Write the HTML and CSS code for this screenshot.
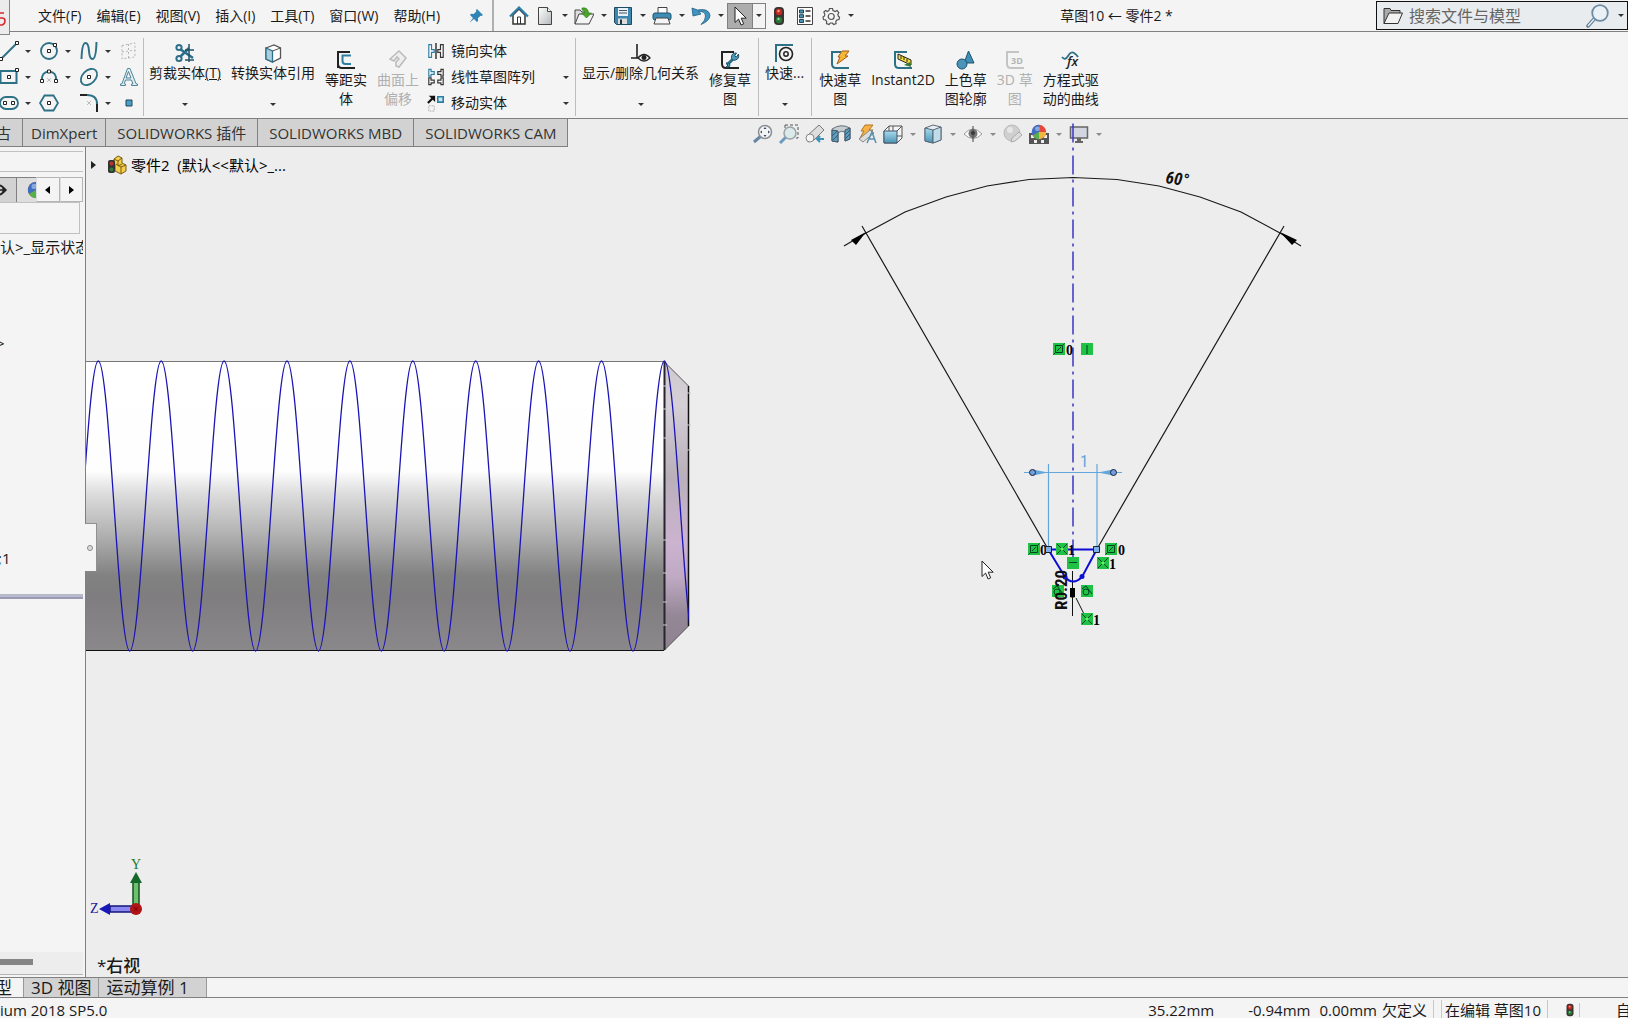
FILE: index.html
```html
<!DOCTYPE html>
<html lang="zh-CN">
<head>
<meta charset="utf-8">
<title>草图10 ← 零件2 *</title>
<link rel="stylesheet" href="styles.css">
</head>
<body>
<svg class="defs" aria-hidden="true">
  <defs>
    <linearGradient id="steel" x1="0" y1="0" x2="0" y2="1"><stop offset="0" stop-color="#a9dcef"/><stop offset="1" stop-color="#4a93b5"/></linearGradient>
    <linearGradient id="silver" x1="0" y1="0" x2="1" y2="1"><stop offset="0" stop-color="#fff"/><stop offset="1" stop-color="#b4b8ba"/></linearGradient>
    <symbol id="light" viewBox="0 0 20 20"><rect x="5" y="1" width="10" height="18" rx="4" fill="#3b3331"/><circle cx="10" cy="6" r="3.2" fill="#c9281f"/><circle cx="9.500" cy="5" r="1.200" fill="#f3a49c"/><circle cx="10" cy="14" r="3.200" fill="#247a35"/><circle cx="9.500" cy="13" r="1.200" fill="#8fd298"/></symbol>
    <symbol id="arrow" viewBox="0 0 20 20"><path d="M5 1v15.500l3.600-3.400 2.500 5.900 2.600-1.200-2.500-5.600h5z" fill="#fff" stroke="#222"/></symbol>
    <symbol id="ball" viewBox="0 0 20 20"><circle cx="10" cy="10" r="9" fill="#e8483c"/><path d="M10 10V1a9 9 0 0 0-7.800 13.500z" fill="#3c6fc4"/><path d="M10 10l-7.800 4.500A9 9 0 0 0 10 19z" fill="#54b24c"/><path d="M10 10v9a9 9 0 0 0 9-9z" fill="#f0b73c"/><circle cx="8" cy="6" r="3" fill="#fff" opacity=".4"/></symbol>
  </defs>
</svg>

<header class="titlebar">
  <div class="menubar">
    <button class="app-logo" aria-label="SOLIDWORKS"><svg width="9" height="20" viewBox="0 0 9 20"><path d="M0 6h4M0 11h2q3 0 3 3t-3 4H0" fill="none" stroke="#d8262c" stroke-width="1.500"/></svg></button>
    <nav class="menu">
      <button>文件(F)</button><button>编辑(E)</button><button>视图(V)</button><button>插入(I)</button><button>工具(T)</button><button>窗口(W)</button><button>帮助(H)</button>
    </nav>
    <button class="pin" aria-label="固定菜单"><svg width="14" height="14" viewBox="0 0 14 14"><path d="M8 0l6 6-1.500 1-1-.3-2.600 2.600.2 2.700-1.200 1L5 10l-4.500 3.800L4 9 1 6l1-1.200 2.700.2L7.300 2.400 7 1z" fill="#2f86b4"/></svg></button>
  </div>
  <div class="quick">
    <button class="tool" aria-label="主页"><svg viewBox="0 0 20 20"><path d="M4 9v9h12V9l-6-6z" fill="#fff" stroke="#333" stroke-width="1.500"/><path d="M8.500 18v-7h3v7" fill="none" stroke="#333"/><path d="M1 10.500l9-9 9 9" fill="none" stroke="#2d7fa8" stroke-width="2.200"/></svg></button>
    <button class="tool" aria-label="新建"><svg viewBox="0 0 20 20"><path d="M3.500 1.500h9l4 4v13h-13z" fill="url(#silver)" stroke="#444"/><path d="M12.500 1.500v4h4" fill="#fff" stroke="#444"/></svg></button>
    <button class="drop" aria-label="新建选项"><i class="caret"></i></button>
    <button class="tool" aria-label="打开"><svg viewBox="0 0 20 20"><path d="M1 18V4h5l2 2h6v2" fill="#ddd" stroke="#444"/><path d="M1 18L5 8h15l-5 10z" fill="#f4f4f4" stroke="#444"/><path d="M8 2q6-1 6.500 5h3l-5 5-5-5h3q0-3-2.500-3z" fill="#4ca52c" stroke="#2c741a" stroke-width=".6"/></svg></button>
    <button class="drop" aria-label="打开选项"><i class="caret"></i></button>
    <button class="tool" aria-label="保存"><svg viewBox="0 0 20 20"><path d="M1.500 1.500h17v17h-15l-2-2z" fill="#3d87ae" stroke="#1f4a5f"/><path d="M5 2h10v8H5z" fill="#e8f1f5"/><path d="M6 4.500h8M6 7h8" stroke="#456"/><path d="M5 12.500h9V18H5z" fill="#ddd"/><path d="M7 13.500h2V18H7z" fill="#234"/></svg></button>
    <button class="drop" aria-label="保存选项"><i class="caret"></i></button>
    <button class="tool" aria-label="打印"><svg viewBox="0 0 20 20"><path d="M6 7V1.500h9V7" fill="#fff" stroke="#444"/><rect x="1" y="7" width="18" height="7" rx="2" fill="#3e8db5" stroke="#1f536d"/><path d="M4 12h12l2 6H2z" fill="#f5f5f5" stroke="#444"/></svg></button>
    <button class="drop" aria-label="打印选项"><i class="caret"></i></button>
    <button class="tool" aria-label="撤销"><svg viewBox="0 0 20 20"><path d="M1 2l1 8 8-2-2.500-2Q14 4.500 14.500 10q.3 4-4.500 8.500Q18.500 15 19 9.500 18 2 6.500 4z" fill="#3f95c2" stroke="#1f5d80" stroke-width=".8"/></svg></button>
    <button class="drop" aria-label="撤销选项"><i class="caret"></i></button>
    <button class="tool pressed" aria-label="选择"><svg viewBox="0 0 20 20"><use href="#arrow"/></svg></button>
    <button class="drop boxed" aria-label="选择选项"><i class="caret"></i></button>
    <button class="tool" aria-label="重建模型"><svg viewBox="0 0 20 20"><use href="#light"/></svg></button>
    <button class="tool" aria-label="文件属性"><svg viewBox="0 0 20 20"><path d="M2.500 1.500h15v17h-15z" fill="#fff" stroke="#444"/><path d="M4.500 4h4v3h-4zM4.500 8.700h4v3h-4zM4.500 13.500h4v3h-4z" fill="#4b93b8" stroke="#245"/><path d="M10.500 5h5M10.500 10h5M10.500 15h5" stroke="#333" stroke-width="1.300"/></svg></button>
    <button class="tool" aria-label="选项"><svg viewBox="0 0 20 20"><path d="M8.500 2.500h3l.5 2 2 1 2-1 1.800 2-1 2 .7 2 1 .5-.5 2.500-2 .3-1.200 1.700.3 2-2.500 1-1.300-1.500h-2L8 18.500l-2.500-1 .2-2-1.200-1.700-2-.3L2 11l1.500-1 .3-2-1-1.800L4.600 4.500l1.900 1 1.500-1z" fill="none" stroke="#555" stroke-width="1.200"/><circle cx="10.200" cy="10.500" r="3" fill="none" stroke="#555" stroke-width="1.200"/></svg></button>
    <button class="drop" aria-label="选项菜单"><i class="caret"></i></button>
  </div>
  <h1 class="doc-title">草图10 ← 零件2 *</h1>
  <form class="search">
    <svg width="20" height="18" viewBox="0 0 20 18"><path d="M1 16.500V1.500h6l1 2h9V6" fill="#aaa" stroke="#333"/><path d="M1 16.500L6 6h13.500L15 16.500z" fill="#f2f2f2" stroke="#333"/></svg>
    <input type="search" placeholder="搜索文件与模型" aria-label="搜索文件与模型">
    <button type="button" class="go" aria-label="搜索"><svg width="24" height="24" viewBox="0 0 24 24"><path d="M2 22l7-8" stroke="#5c7b94" stroke-width="3.500" stroke-linecap="round"/><path d="M2 22l7-8" stroke="#e4edf2" stroke-width="1.500"/><circle cx="14" cy="9" r="7.800" fill="#e9f1f6" stroke="#6c8ca6" stroke-width="1.800"/></svg></button>
    <button type="button" class="drop" aria-label="搜索选项"><i class="caret"></i></button>
  </form>
</header>

<section class="ribbon" aria-label="草图">
  <div class="sketch-grid">
    <div><button class="tool" aria-label="直线"><svg viewBox="0 0 20 20"><path d="M3 17L17 3" stroke="#2d7186" stroke-width="2"/><path d="M.500 16.500h3v3h-3zM16.500 .500h3v3h-3z" fill="#fff" stroke="#222"/></svg></button><button class="drop" aria-label="直线选项"><i class="caret"></i></button></div>
    <div><button class="tool" aria-label="圆"><svg viewBox="0 0 20 20"><circle cx="10" cy="10" r="8" fill="none" stroke="#2d7186" stroke-width="1.800"/><path d="M8.500 8.500h3v3h-3zM14.500 2.500h3v3h-3z" fill="#fff" stroke="#222"/></svg></button><button class="drop" aria-label="圆选项"><i class="caret"></i></button></div>
    <div><button class="tool" aria-label="样条曲线"><svg viewBox="0 0 20 20"><path d="M2.500 18Q3 2 6.500 2q3 0 3.500 8t3.500 8Q17 18 17.500 1" fill="none" stroke="#2d7186" stroke-width="2"/></svg></button><button class="drop" aria-label="样条曲线选项"><i class="caret"></i></button></div>
    <div><button class="tool" aria-label="基准面"><svg viewBox="0 0 20 20"><path d="M3 4.500l13-2.500v14l-13 2zM9.500 3v14M3 11l13-2" fill="none" stroke="#b5b5b5" stroke-dasharray="2 2"/></svg></button></div>
    <div><button class="tool" aria-label="矩形"><svg viewBox="0 0 20 20"><path d="M1.500 4h16v12h-16z" fill="none" stroke="#2d7186" stroke-width="2"/><path d="M8.500 8.500h3v3h-3zM16.500 1.500h3v3h-3z" fill="#fff" stroke="#222"/></svg></button><button class="drop" aria-label="矩形选项"><i class="caret"></i></button></div>
    <div><button class="tool" aria-label="圆弧"><svg viewBox="0 0 20 20"><path d="M3 14Q2 5 10 4.500 18 5 17 14" fill="none" stroke="#2d7186" stroke-width="1.800"/><path d="M1.500 12.500h3v3h-3zM8.500 3h3v3h-3zM15.500 12.500h3v3h-3z" fill="#fff" stroke="#222"/><path d="M8 11l4 4m0-4l-4 4" stroke="#bbb"/></svg></button><button class="drop" aria-label="圆弧选项"><i class="caret"></i></button></div>
    <div><button class="tool" aria-label="椭圆"><svg viewBox="0 0 20 20"><ellipse cx="10" cy="10" rx="9.500" ry="6.500" fill="none" stroke="#2d7186" stroke-width="1.800" transform="rotate(-45 10 10)"/><path d="M8.500 8.500h3v3h-3z" fill="#fff" stroke="#222"/></svg></button><button class="drop" aria-label="椭圆选项"><i class="caret"></i></button></div>
    <div><button class="tool" aria-label="文字"><svg viewBox="0 0 20 20"><path d="M1.500 18.500h5v-1.500l-1.300-.3L6.500 13h6l1.500 3.800-1.500.2v1.500h6V17l-1.500-.3L11 1.500H8.500L3 16.700l-1.500.3zM7 11l2.500-6.500L12 11z" fill="#e6f0f4" stroke="#4d8599"/></svg></button></div>
    <div><button class="tool" aria-label="槽口"><svg viewBox="0 0 20 20"><rect x="1" y="4" width="18" height="12" rx="6" fill="none" stroke="#2d7186" stroke-width="1.800"/><path d="M4.500 8.500h3v3h-3zM12.500 8.500h3v3h-3z" fill="#fff" stroke="#222"/></svg></button><button class="drop" aria-label="槽口选项"><i class="caret"></i></button></div>
    <div><button class="tool" aria-label="多边形"><svg viewBox="0 0 20 20"><path d="M5.500 2.500h9L19 10l-4.500 7.500h-9L1 10z" fill="none" stroke="#2d7186" stroke-width="1.800"/><path d="M8.500 8.500h3v3h-3z" fill="#fff" stroke="#222"/></svg></button></div>
    <div><button class="tool" aria-label="圆角"><svg viewBox="0 0 20 20"><path d="M1 2h7" stroke="#222" stroke-width="2"/><path d="M8 2q10 0 10 9" fill="none" stroke="#2d7186" stroke-width="2"/><path d="M18 11v8" stroke="#222" stroke-width="2"/><path d="M8 8l4 4m0-4l-4 4" stroke="#bbb"/></svg></button><button class="drop" aria-label="圆角选项"><i class="caret"></i></button></div>
    <div><button class="tool" aria-label="点"><svg viewBox="0 0 20 20"><path d="M7 7h6v6H7z" fill="#4c9fc4" stroke="#1f4658"/></svg></button></div>
  </div>
  <div class="group">
    <button class="big high"><svg viewBox="0 0 20 20"><path d="M5 6l13 9M5 14L14 5" stroke="#2d6f8a" stroke-width="2.500"/><circle cx="4" cy="4.500" r="2.600" fill="none" stroke="#2d6f8a" stroke-width="2"/><circle cx="4" cy="15.500" r="2.600" fill="none" stroke="#2d6f8a" stroke-width="2"/><path d="M14 1v18M10 7h9M10 17h9" stroke="#1f5468" stroke-width="1.500"/></svg><span>剪裁实体<u>(T)</u></span><i class="caret"></i></button>
    <button class="big high"><svg viewBox="0 0 20 20"><path d="M3 5l8-3 6.500 3v10l-8 4L3 16z" fill="#fff" stroke="#555" stroke-width="1.300"/><path d="M3 5l6.500 3v11L3 16z" fill="#a9cedd" stroke="#2d6f8a" stroke-width="1.300"/><path d="M9.500 8l8-3" stroke="#555"/></svg><span>转换实体引用</span><i class="caret"></i></button>
    <button class="big"><svg viewBox="0 0 20 20"><path d="M14 2H2v16" fill="none" stroke="#222" stroke-width="2"/><path d="M2 14q0 4 4 4h13" fill="none" stroke="#222" stroke-width="2"/><path d="M15 5.500H6.500V11q0 3 3 3H15" fill="none" stroke="#2d7ea3" stroke-width="2"/></svg><span>等距实<br>体</span></button>
    <button class="big" disabled><svg viewBox="0 0 20 20"><path d="M2 9l9-8 7 7-7 9-3-1v-4l3-3-2-2-3 4z" fill="#eee" stroke="#bbb" stroke-width="1.500"/></svg><span>曲面上<br>偏移</span></button>
    <div class="list">
      <div><button><svg viewBox="0 0 20 20"><path d="M10 1v18" stroke="#222" stroke-width="1.500"/><path d="M2 3h3v5.500h3v3H5V17H2z" fill="#fff" stroke="#2d7ea3" stroke-width="1.300"/><path d="M18 3h-3v5.500h-3v3h3V17h3z" fill="#fff" stroke="#333" stroke-width="1.300"/></svg>镜向实体</button></div>
      <div><button><svg viewBox="0 0 20 20"><g fill="#fff" stroke-width="1.300"><path d="M2 1.500h2.500v2.500H8v3H4.500v2H2z" stroke="#2d7ea3"/><path d="M18 1.500h-2.500v2.500H12v3h3.500v2H18z" stroke="#333"/><path d="M2 11h2.500v2.500H8v3H4.500v2H2zM18 11h-2.500v2.500H12v3h3.500v2H18z" stroke="#333"/></g></svg>线性草图阵列</button><button class="drop" aria-label="阵列选项"><i class="caret"></i></button></div>
      <div><button><svg viewBox="0 0 20 20"><path d="M1 10l5-5" stroke="#111" stroke-width="2.500"/><path d="M2 2h7v7z" fill="#111"/><path d="M12 3h6v6h-6z" fill="#c8e5f0" stroke="#2d7ea3" stroke-width="1.800"/><path d="M2 13h6v6H2z" fill="none" stroke="#aaa" stroke-dasharray="2 1"/></svg>移动实体</button><button class="drop" aria-label="移动选项"><i class="caret"></i></button></div>
    </div>
  </div>
  <div class="group roomy">
    <button class="big high"><svg viewBox="0 0 20 20"><path d="M6 1v14M0 15h10" stroke="#222" stroke-width="1.600"/><path d="M7 15q6-7 12 0-6 6-12 0z" fill="#fff" stroke="#222" stroke-width="1.300"/><circle cx="13" cy="14.500" r="2.500" fill="#222"/></svg><span>显示/删除几何关系</span><i class="caret"></i></button>
    <button class="big"><svg viewBox="0 0 20 20"><path d="M14 2H2v12q0 4 4 4h13" fill="none" stroke="#222" stroke-width="2"/><path d="M7 15l7-7" stroke="#2b6a88" stroke-width="3"/><path d="M18.500 4q1 5-3 6t-4-3q0-4 5-4l-2 3 2 1zM10 15q0 3-4 2l2-2-2-2q4-1 4 2z" fill="#4a9cc0" stroke="#1f4e64"/></svg><span>修复草<br>图</span></button>
  </div>
  <div class="group roomy">
    <button class="big high"><svg viewBox="0 0 20 20"><path d="M1 19V2h17" fill="none" stroke="#2d7186" stroke-width="2"/><circle cx="11" cy="11" r="6.500" fill="none" stroke="#222" stroke-width="1.600"/><circle cx="11" cy="11" r="2.200" fill="#fff" stroke="#222" stroke-width="1.500"/></svg><span>快速...</span><i class="caret"></i></button>
  </div>
  <div class="group last">
    <button class="big"><svg viewBox="0 0 20 20"><path d="M11 2H2v12q0 4 4 4h13" fill="none" stroke="#2d7186" stroke-width="2"/><path d="M12 1h7l-4 5h3L7 14l3-7H8z" fill="#f6b73a" stroke="#a85b10"/></svg><span>快速草<br>图</span></button>
    <button class="big"><svg viewBox="0 0 20 20"><path d="M14 2H2v12q0 4 4 4h13" fill="none" stroke="#2d7186" stroke-width="2"/><path d="M5 4l13 6v5L5 9z" fill="#f5df3c" stroke="#222"/><path d="M8 6v3M11 7v3M14 9v3" stroke="#222"/><path d="M11 15l7 2-1-5z" fill="#347c3c"/></svg><span>Instant2D</span></button>
    <button class="big"><svg viewBox="0 0 20 20"><path d="M12.500 1L18 13H8z" fill="#3f8fb6" stroke="#1f526b"/><circle cx="6" cy="14" r="5" fill="#4a94b9" stroke="#1f526b"/></svg><span>上色草<br>图轮廓</span></button>
    <button class="big" disabled><svg viewBox="0 0 20 20"><path d="M14 2H2v12q0 4 4 4h13" fill="none" stroke="#c4c4c4" stroke-width="2"/><text x="6" y="14" font-size="9" font-weight="700" fill="#b5b5b5">3D</text></svg><span>3D 草<br>图</span></button>
    <button class="big"><svg viewBox="0 0 20 20"><path d="M1 7q3 4 6-1t6-3 4 4" fill="none" stroke="#2d7186" stroke-width="1.800"/><text x="6" y="16" font-size="13" font-style="italic" font-weight="600" fill="#222">fx</text></svg><span>方程式驱<br>动的曲线</span></button>
  </div>
</section>

<div class="tabstrip">
  <div class="cmd-tabs" role="tablist">
    <button role="tab" class="cut">古</button><button role="tab" class="snug">DimXpert</button><button role="tab">SOLIDWORKS 插件</button><button role="tab">SOLIDWORKS MBD</button><button role="tab">SOLIDWORKS CAM</button>
  </div>
  <div class="view-tools">
    <button class="tool" aria-label="整屏显示全图"><svg viewBox="0 0 20 20"><path d="M1 18l7-6" stroke="#6687a3" stroke-width="3"/><circle cx="12" cy="8" r="6.500" fill="#f2f4f5" stroke="#8a8f93" stroke-width="1.500"/><path d="M12 3l1.500 2h-3zM12 13l1.500-2h-3zM7 8l2-1.500v3zM17 8l-2-1.500v3z" fill="#446"/></svg></button>
    <button class="tool" aria-label="局部放大"><svg viewBox="0 0 20 20"><path d="M6 1h13v13h-3M6 1v4" fill="none" stroke="#555" stroke-dasharray="3 2"/><path d="M1 19l6-6" stroke="#6b9ac0" stroke-width="3"/><circle cx="11" cy="9" r="6" fill="#dbe9ea" stroke="#98a3a8" stroke-width="1.500"/></svg></button>
    <button class="tool" aria-label="上一视图"><svg viewBox="0 0 20 20"><path d="M2 12L14 1l5 5-10 10-6 2z" fill="#ddd" stroke="#777"/><circle cx="5" cy="14" r="4" fill="#f5f5f5" stroke="#888"/><path d="M19 15h-7m3-3l-3 3 3 3" fill="none" stroke="#3c8fb6" stroke-width="2"/></svg></button>
    <button class="tool" aria-label="剖面视图"><svg viewBox="0 0 20 20"><path d="M1 5q9-6 18-1v11l-5 2V8q-4-2-7 1v9l-6-1z" fill="#c6cdd0" stroke="#63717a"/><path d="M1 6l6 1v11l-6-1zM14 6l5-2v11l-5 2z" fill="#5c9dbd" stroke="#456"/><path d="M1 12l5-5M2 16l5-5M14 11l5-5M14 15l5-5" stroke="#2f5f78"/></svg></button>
    <button class="tool" aria-label="动态注解视图"><svg viewBox="0 0 20 20"><path d="M8 1h8l-4 5h4L3 14l4-7H4z" fill="#f5b245" stroke="#b3742a"/><path d="M2 15L13 6l4 3L6 18z" fill="#ddd" stroke="#888"/><path d="M10 19l5-11 4 11m-7.500-4h6" fill="none" stroke="#5a8fb1" stroke-width="1.500"/></svg></button>
    <button class="tool" aria-label="视图定向"><svg viewBox="0 0 20 20"><path d="M1 7l5-5h13v12l-5 5H1zM14 7l5-5M6 2v5M14 12h5M10 2v5" fill="#f4f4f4" stroke="#555"/><path d="M1 7h13v12H1z" fill="url(#steel)" stroke="#456"/></svg></button>
    <button class="drop dim" aria-label="视图定向选项"><i class="caret"></i></button>
    <button class="tool" aria-label="显示样式"><svg viewBox="0 0 20 20"><path d="M2 4l8-3 8 2v13l-8 3-8-2z" fill="#e4eef2" stroke="#667"/><path d="M2 4l8 2v13l-8-2z" fill="url(#steel)" stroke="#567"/><path d="M10 6l8-3v13l-8 3z" fill="#bfdce8" stroke="#567"/></svg></button>
    <button class="drop dim" aria-label="显示样式选项"><i class="caret"></i></button>
    <button class="tool" aria-label="隐藏显示项目"><svg viewBox="0 0 20 20"><path d="M1 10q9-10 18 0-9 9-18 0z" fill="#fff" stroke="#999"/><circle cx="10" cy="9.500" r="4.500" fill="#777"/><circle cx="10" cy="9" r="2" fill="#333"/><path d="M10 2v16" stroke="#444"/></svg></button>
    <button class="drop dim" aria-label="隐藏显示选项"><i class="caret"></i></button>
    <button class="tool" aria-label="编辑外观"><svg viewBox="0 0 20 20"><circle cx="9" cy="9" r="8" fill="#cfcfcf" stroke="#bbb"/><circle cx="7" cy="6" r="3" fill="#e6e6e6"/><path d="M8 18l1-4 7-6 3 3-7 6z" fill="#ddd" stroke="#aaa"/></svg></button>
    <button class="tool" aria-label="应用布景"><svg viewBox="0 0 20 20"><path d="M0 9h20v11H0z" fill="#555"/><path d="M2 11h3v3H2zM15 11h3v3h-3zM5 16h3v3H5zM12 16h3v3h-3z" fill="#eee"/><use href="#ball" x="2" y="0" width="16" height="16"/></svg></button>
    <button class="drop dim" aria-label="布景选项"><i class="caret"></i></button>
    <button class="tool" aria-label="视图设定"><svg viewBox="0 0 20 20"><path d="M1.500 3h17v11h-17z" fill="#d3d6e0" stroke="#666" stroke-width="1.500"/><path d="M8 14h4v3h2v2H6v-2h2z" fill="#666"/></svg></button>
    <button class="drop dim" aria-label="视图设定选项"><i class="caret"></i></button>
  </div>
</div>

<main class="workspace">
  <aside class="panel">
    <div class="panel-head"></div>
    <div class="panel-tabs">
      <button class="ptab" aria-label="尺寸专家"><svg width="8" height="16" viewBox="0 0 8 16"><circle cx="-1" cy="8" r="4.500" fill="none" stroke="#222" stroke-width="2"/><path d="M-2 8h8M3 5l3 3-3 3" fill="none" stroke="#222" stroke-width="1.500"/></svg></button>
      <button class="ptab ball" aria-label="外观"><svg width="18" height="18"><use href="#ball" width="18" height="18"/></svg></button>
      <button class="pscroll" aria-label="向左"><svg width="5" height="8" viewBox="0 0 5 8"><path d="M5 0v8L0 4z"/></svg></button>
      <button class="pscroll" aria-label="向右"><svg width="5" height="8" viewBox="0 0 5 8"><path d="M0 0v8l5-4z"/></svg></button>
    </div>
    <div class="filter"></div>
    <div class="tree">
      <p class="node root">默认&gt;_显示状态</p>
      <p class="node mid">&gt;</p>
      <p class="node low">;1</p>
      <div class="rollback"></div>
    </div>
    <div class="hscroll"><span></span></div>
  </aside>

  <section class="canvas" aria-label="图形区域">
    <svg class="model" width="100%" height="100%">
      <defs>
        <linearGradient id="shaft" x1="0" y1="361" x2="0" y2="650" gradientUnits="userSpaceOnUse"><stop offset="0" stop-color="#fff"/><stop offset=".38" stop-color="#fefefe"/><stop offset=".46" stop-color="#dcdcdc"/><stop offset=".6" stop-color="#b0b1b0"/><stop offset=".74" stop-color="#828282"/><stop offset=".82" stop-color="#7f7d7f"/><stop offset="1" stop-color="#8a888a"/></linearGradient>
        <linearGradient id="bevel" x1="0" y1="361" x2="0" y2="650" gradientUnits="userSpaceOnUse"><stop offset="0" stop-color="#cfc9cf"/><stop offset=".15" stop-color="#d5cfd6"/><stop offset=".4" stop-color="#b9b0ba"/><stop offset=".63" stop-color="#ccb3d0"/><stop offset=".75" stop-color="#bfa9c3"/><stop offset=".88" stop-color="#948796"/><stop offset="1" stop-color="#8f8390"/></linearGradient>
        <clipPath id="part"><path d="M86 355h603v300H86z"/></clipPath>
        <symbol id="rel-coin" viewBox="0 0 12 12"><path d="M0 0h12v12H0z" fill="#1fc244"/><path d="M2.500 2.500h7v7h-7zM4 8l4-4M9.500 2.500l2-2M.500 11.500l2-2" fill="none" stroke="#042"/></symbol>
        <symbol id="rel-x" viewBox="0 0 12 12"><path d="M0 0h12v12H0z" fill="#1fc244"/><path d="M1 1l10 10M11 1L1 11" stroke="#042"/><circle cx="6" cy="6" r="1.500" fill="#6e6"/></symbol>
        <symbol id="rel-tan" viewBox="0 0 12 12"><path d="M0 0h12v12H0z" fill="#1fc244"/><path d="M1 4l4-3 6 8" fill="none" stroke="#042"/><circle cx="5" cy="7" r="3" fill="none" stroke="#042"/></symbol>
      </defs>
      <g transform="translate(-86 -147)">
        <path d="M86 361.500H664V650.500H86z" fill="url(#shaft)"/>
        <path d="M664 361.500l24.500 24.500v240L664 650.500z" fill="url(#bevel)"/>
        <path d="M86 361.500H664" stroke="#777"/>
        <path d="M86 650.500H664" stroke="#111"/>
        <path d="M664 361.500l24.500 24.500M688.500 626L664 650.500" stroke="#555"/>
        <path d="M664.500 362V650" stroke="#282430" stroke-width="2"/>
        <path d="M688.500 386V626" stroke="#111" stroke-width="1.500"/>
        <path d="M663 386h4M663 409h4M663 438h4M663 540h4M663 573h4M663 602h4M663 625h4M687 393h4M687 425h4M687 450h4" stroke="#ccc"/>
        <path clip-path="url(#part)" fill="none" stroke="#1a14b4" stroke-width="1.300" d="M66.850 651c11.450 0 20-290 31.450-290s20 290 31.450 290s20-290 31.450-290s20 290 31.450 290s20-290 31.450-290s20 290 31.450 290s20-290 31.450-290s20 290 31.450 290s20-290 31.450-290s20 290 31.450 290s20-290 31.450-290s20 290 31.450 290s20-290 31.450-290s20 290 31.450 290s20-290 31.450-290s20 290 31.450 290s20-290 31.450-290s20 290 31.450 290s20-290 31.450-290s20 290 31.450 290"/>

        <path d="M1073 123.500V560" stroke="#3a36c8" stroke-width="1.500" stroke-dasharray="19 5 3 5"/>
        <g stroke="#1a1a1a" fill="none">
          <path d="M866 233L905 212 946 197 987 186 1029 179.500 1073 177.500 1117 179.500 1159 186 1200 197 1241 212 1280 233" stroke-width="1.200"/>
          <path d="M862 226L1048 549M1284 226L1097 549M844 246l22-13M1301 246l-21-13" stroke-width="1.200"/>
          <path d="M866 232l-15 8 5 5zM1280 232l17 8-5 5z" fill="#000" stroke="none"/>
        </g>
        <text class="dim-text slant" x="1165" y="183" transform="rotate(8 1165 183)">60°</text>
        <g stroke="#62a6dc" fill="none" stroke-width="1.200">
          <path d="M1024 472.500h98M1048.500 464v84M1097 464v84"/>
          <path d="M1048 472.500l-15-3v6zM1098 472.500l15-3v6z" fill="#62a6dc" stroke="none"/>
        </g>
        <g fill="#6f9fe0" stroke="#223"><circle cx="1032.500" cy="472.500" r="3"/><circle cx="1113.500" cy="472.500" r="3"/></g>
        <text class="dim-text blue" x="1080" y="467">1</text>
        <path d="M1072.500 571v45M1072.500 590l-2 7h4zM1076 598l10 20" stroke="#111"/>
        <path d="M1070 588h5v9h-5z" fill="#000"/>
        <path d="M1048 549.500h49M1048 549l17 28Q1073 586 1082 577L1097 549" fill="none" stroke="#0d0dd4" stroke-width="2"/>
        <circle cx="1065" cy="577" r="2.500" fill="#0d0dd4"/><circle cx="1082" cy="576.500" r="2.500" fill="#0d0dd4"/>
        <g>
          <use href="#rel-coin" x="1053" y="343" width="12" height="12"/><path d="M1081 343h12v12h-12z" fill="#1fc244"/><path d="M1087 345v9" stroke="#042"/>
          <use href="#rel-coin" x="1028" y="543" width="12" height="12"/><use href="#rel-x" x="1056" y="543" width="12" height="12"/><use href="#rel-coin" x="1105" y="543" width="12" height="12"/>
          <use href="#rel-x" x="1097" y="557" width="12" height="12"/><path d="M1067 557h12v12h-12z" fill="#1fc244"/><path d="M1069 562.500h8" stroke="#042"/>
          <use href="#rel-tan" x="1052" y="585" width="12" height="12"/><use href="#rel-tan" x="1081" y="585" width="12" height="12"/><use href="#rel-x" x="1081" y="613" width="12" height="12"/>
        </g>
        <g class="rel-text"><text x="1066" y="355">0</text><text x="1040" y="555">0</text><text x="1068" y="555">1</text><text x="1118" y="555">0</text><text x="1109" y="569">1</text><text x="1093" y="625">1</text></g>
        <path d="M1045.500 546.500h6v6h-6zM1093.500 546.500h6v6h-6z" fill="#7fb0e8" stroke="#123"/>
        <text class="dim-text" x="1067" y="610" transform="rotate(-90 1067 610)">R0.20</text>
        <use href="#arrow" x="977" y="560" width="20" height="20"/>
      </g>
    </svg>
    <div class="flyout">
      <svg width="5" height="8" viewBox="0 0 5 8"><path d="M0 0v8l5-4z" fill="#222"/></svg>
      <svg class="part-icon" width="20" height="20" viewBox="0 0 20 20"><path d="M7 4l4-3 4 2v5l4 2v6l-5 3-6-3V9L7 8z" fill="#f2cf4a" stroke="#7a5a10"/><path d="M7 4l4 2 4-3M11 6v5l4-2M14 12v7M9 9l5 3 5-2" fill="none" stroke="#7a5a10"/><rect x="1" y="5" width="7" height="13" rx="2" fill="#333"/><circle cx="4.500" cy="8.500" r="2" fill="#b9342c"/><circle cx="4.500" cy="14.500" r="2" fill="#2e7a3c"/></svg>
      <span>零件2&nbsp; (默认&lt;&lt;默认&gt;_...</span>
    </div>
    <button class="handle" aria-label="折叠面板"><i></i></button>
    <svg class="triad" width="60" height="62" viewBox="0 0 60 62">
      <path d="M43 50V22h6v28z" fill="#6cc070" stroke="#14501c" stroke-width="1.500"/><path d="M46 13l6 11H40z" fill="#16682a"/>
      <path d="M20 47h24v6H20z" fill="#8888f0" stroke="#15157a" stroke-width="1.500"/><path d="M9 50l11-6v12z" fill="#1818b8"/>
      <circle cx="46" cy="50" r="6" fill="#b01414"/><path d="M44 48l4 4m0-4l-4 4" stroke="#700"/>
      <text x="41" y="10" fill="#1c7a2a">Y</text><text x="0" y="54" fill="#1c1c9c">Z</text>
    </svg>
    <span class="view-name">*右视</span>
  </section>
</main>

<nav class="doc-tabs">
  <button class="cut active">型</button><button>3D 视图</button><button class="wide">运动算例 1</button>
</nav>

<footer class="status">
  <span class="product">ium 2018 SP5.0</span>
  <span class="coord">35.22mm</span><span class="coord second">-0.94mm</span><span class="coord third">0.00mm</span>
  <span class="state">欠定义</span>
  <span class="editing">在编辑 草图10</span>
  <span class="rebuild"><svg width="14" height="14"><use href="#light" width="14" height="14"/></svg></span>
  <span class="units">自</span>
</footer>
</body>
</html>
```
FILE: styles.css
```css
* { box-sizing: border-box; }

body {
  margin: 0;
  height: 100vh;
  overflow: hidden;
  display: flex;
  flex-direction: column;
  background: #f4f4f4;
  color: #1a1a1a;
  font: 14px/20px "Open Sans", "Noto Sans CJK SC", sans-serif;
}

button {
  margin: 0;
  padding: 0;
  border: 0;
  background: none;
  color: inherit;
  font: inherit;
  white-space: nowrap;
}

svg { display: block; flex: none; }
p { margin: 0; }
.defs { position: absolute; width: 0; height: 0; }

.caret {
  display: block;
  border: 3px solid transparent;
  border-top-color: #333;
  border-bottom: 0;
}

.tool, .drop { display: flex; align-items: center; justify-content: center; flex: none; }
.tool { width: 26px; height: 26px; }
.tool svg { width: 20px; height: 20px; }
.drop { width: 13px; height: 26px; }
.dim { width: 14px; }
.dim .caret { border-top-color: #8a8a8a; }

/* Title bar */
.titlebar {
  flex: none;
  display: flex;
  height: 32px;
  border-bottom: 1px solid #808080;
}
.menubar {
  display: flex;
  align-items: center;
  min-width: 494px;
  padding-right: 9px;
  border-right: 2px solid #b0b0b0;
}
.app-logo {
  position: relative;
  align-self: flex-start;
  width: 10px;
  height: 35px;
  border: solid #888;
  border-width: 0 1px 1px 0;
  background: #ececec;
}
.menu { display: flex; gap: 15px; margin-left: 28px; }
.pin { margin-left: auto; }
.quick { display: flex; align-items: center; margin-left: 12px; }
.pressed { background: #adadad; border: 1px solid #808080; }
.boxed { border: 1px solid #808080; border-left: 0; }
.doc-title { flex: 1; margin: 0; align-self: center; font-size: 14px; font-weight: 400; text-align: center; }
.search {
  display: flex;
  align-items: center;
  width: 252px;
  height: 29px;
  margin-top: 1px;
  padding-left: 6px;
  border: 1px solid #111;
  background: #e9ecee;
}
.search input {
  flex: 1;
  min-width: 0;
  padding: 0 6px;
  border: 0;
  background: none;
  font: 16px/24px "Open Sans", "Noto Sans CJK SC", sans-serif;
}
.search input::placeholder { color: #666; opacity: 1; }
.go { margin-right: 4px; }

/* Ribbon */
.ribbon {
  flex: none;
  display: flex;
  height: 87px;
  padding: 6px 0 2px;
  border-bottom: 1px solid #808080;
}
.sketch-grid {
  display: grid;
  grid-template-columns: repeat(3, 40px) 24px;
  grid-auto-rows: 26px;
  margin-left: -1px;
  border-right: 1px solid #bdbdbd;
}
.sketch-grid > div { display: flex; }
.sketch-grid .tool { width: 20px; }
.sketch-grid .drop { width: 18px; }
.group { display: flex; border-right: 1px solid #bdbdbd; }
.group.roomy { padding: 0 2px 0 1px; }
.group.last { padding-left: 2px; border-right: 0; }
.big {
  display: flex;
  flex-direction: column;
  align-items: center;
  padding: 12px 5px 0;
  line-height: 19px;
}
.big > svg { width: 20px; height: 20px; }
.big.high { padding-top: 5px; }
.big.high .caret { margin-top: 21px; }
.big u { text-decoration-thickness: 1px; }
.big:disabled { color: #b0b0b0; }
.list { display: grid; grid-auto-rows: 26px; width: 151px; padding: 0 2px 0 3px; }
.list > div { display: flex; justify-content: space-between; align-items: center; }
.list button:first-child { display: flex; align-items: center; gap: 6px; }
.list svg { width: 18px; height: 18px; }

/* Command tabs and view toolbar */
.tabstrip { flex: none; display: flex; height: 28px; background: #ededed; }
.cmd-tabs { display: flex; }
.cmd-tabs button {
  padding: 0 11px;
  border: solid #808080;
  border-width: 0 1px 1px 0;
  background: #d2d2d2;
  color: #333;
  font-size: 15px;
}
.cmd-tabs .snug { padding: 0 8px; }
.cmd-tabs .cut { display: flex; justify-content: flex-end; align-items: center; width: 23px; padding-right: 11px; overflow: hidden; }
.view-tools { position: absolute; left: 750px; top: 121px; display: flex; }

/* Feature panel */
.workspace { flex: 1; min-height: 0; display: flex; }
.panel {
  flex: none;
  display: flex;
  flex-direction: column;
  width: 86px;
  padding: 4px 2px 2px 0;
  border-right: 1px solid #808080;
  overflow: hidden;
}
.panel-head { flex: none; height: 21px; border: solid #c0c0c0; border-width: 1px 0; }
.panel-tabs { flex: none; display: flex; height: 25px; margin-top: 5px; }
.ptab { display: flex; align-items: center; width: 17px; border: solid #808080; border-width: 1px 1px 0 0; background: #d2d2d2; overflow: hidden; }
.ptab.ball { width: 20px; padding-left: 10px; border-right: 0; background: #dedede; }
.pscroll { display: flex; align-items: center; justify-content: center; width: 24px; border: 1px solid #b5b5b5; border-left-color: #ddd; }
.filter { flex: none; width: 80px; height: 32px; border: 1px solid #c0c0c0; border-left: 0; }
.tree { flex: 1; padding-top: 3px; font-size: 15px; }
.node { height: 20px; white-space: nowrap; overflow: hidden; }
.root { text-indent: -15px; }
.mid { margin-top: 76px; text-indent: -4px; }
.low { margin-top: 195px; text-indent: -2px; }
.rollback { height: 5px; margin-top: 26px; background: #b9b9cc; border-bottom: 2px solid #9a9ab4; }
.hscroll { flex: none; height: 23px; padding-top: 7px; background: #ededed; border-bottom: 1px solid #b5b5b5; }
.hscroll span { display: block; width: 33px; height: 6px; background: #858585; }

/* Graphics area */
.canvas { position: relative; flex: 1; min-width: 0; background: #ededed; }
.model { position: relative; overflow: visible; pointer-events: none; }
.dim-text { font: 700 17px "Roboto Condensed", "Liberation Sans Narrow", "Liberation Sans", sans-serif; fill: #111; }
.dim-text.slant { font-style: italic; }
.dim-text.blue { font-weight: 400; fill: #62a6dc; }
.rel-text { font: 700 14px "Liberation Serif", serif; fill: #000; }
.flyout { position: absolute; left: 5px; top: 8px; display: flex; align-items: center; color: #000; font-size: 15px; }
.part-icon { margin: 0 4px 0 11px; }
.handle {
  position: absolute;
  left: -1px;
  top: 376px;
  width: 12px;
  height: 48px;
  padding-left: 2px;
  border: solid #909090;
  border-width: 1px 1px 0 0;
  background: #f4f4f4;
}
.handle i { display: block; width: 6px; height: 6px; border: 1px solid #888; border-radius: 50%; background: #ddd; }
.triad { position: absolute; left: 4px; bottom: 56px; font: 14px "Liberation Serif", serif; }
.view-name { position: absolute; left: 11px; bottom: 1px; font-size: 17px; font-weight: 500; }

/* Document tabs and status bar */
.doc-tabs { flex: none; display: flex; height: 21px; border: solid #808080; border-width: 1px 0; }
.doc-tabs button { padding: 0 7px; border-right: 1px solid #999; background: #d2d2d2; font-size: 17px; line-height: 18px; }
.doc-tabs .active { background: #f4f4f4; }
.doc-tabs .cut { display: flex; justify-content: flex-end; align-items: center; width: 24px; padding-right: 11px; overflow: hidden; }
.doc-tabs .wide { padding-right: 17px; }
.status { flex: none; display: flex; align-items: center; height: 20px; padding-top: 3px; font-size: 15px; white-space: nowrap; overflow: hidden; }
.product { flex: 1; }
.coord.second { margin-left: 34px; }
.coord.third { margin-left: 9px; }
.state { margin-left: 5px; padding-right: 6px; border-right: 1px solid #c8c8c8; }
.editing { margin-left: 7px; padding: 0 6px 0 3px; border: solid #c8c8c8; border-width: 0 1px; }
.rebuild { width: 32px; padding-left: 15px; border-right: 1px solid #c8c8c8; }
.units { width: 48px; padding-left: 36px; overflow: hidden; }
```
